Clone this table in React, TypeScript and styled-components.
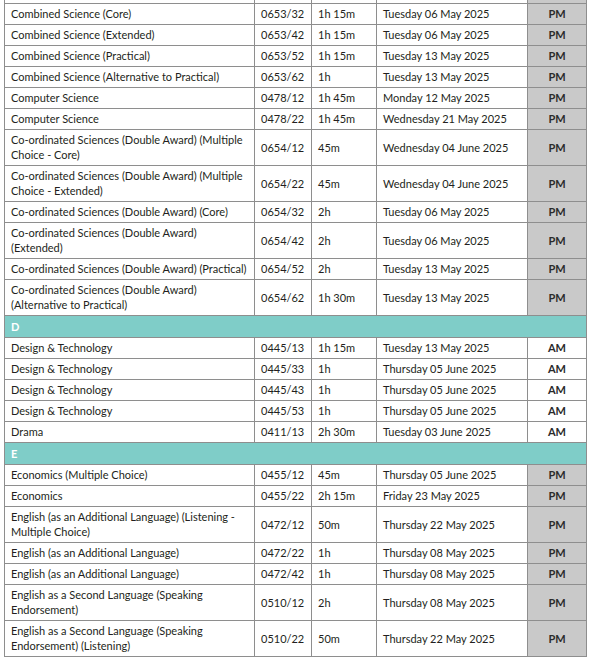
import styled, { createGlobalStyle } from "styled-components";

const GlobalStyle = createGlobalStyle`
	html, body {
		margin: 0;
		padding: 0;
		background: #ffffff;
	}
	body {
		font-family: Lato, "Open Sans", "Liberation Sans", sans-serif;
		color: #231f20;
	}
`;

type Session = "AM" | "PM";

type Exam = {
	title: string;
	code: string;
	duration: string;
	date: string;
	session: Session;
};

type Section = {
	letter?: string;
	exams: Exam[];
};

const sections: Section[] = [
	{
		exams: [
			{ title: "Combined Science (Core)", code: "0653/32", duration: "1h 15m", date: "Tuesday 06 May 2025", session: "PM" },
			{ title: "Combined Science (Extended)", code: "0653/42", duration: "1h 15m", date: "Tuesday 06 May 2025", session: "PM" },
			{ title: "Combined Science (Practical)", code: "0653/52", duration: "1h 15m", date: "Tuesday 13 May 2025", session: "PM" },
			{ title: "Combined Science (Alternative to Practical)", code: "0653/62", duration: "1h", date: "Tuesday 13 May 2025", session: "PM" },
			{ title: "Computer Science", code: "0478/12", duration: "1h 45m", date: "Monday 12 May 2025", session: "PM" },
			{ title: "Computer Science", code: "0478/22", duration: "1h 45m", date: "Wednesday 21 May 2025", session: "PM" },
			{ title: "Co-ordinated Sciences (Double Award) (Multiple\nChoice - Core)", code: "0654/12", duration: "45m", date: "Wednesday 04 June 2025", session: "PM" },
			{ title: "Co-ordinated Sciences (Double Award) (Multiple\nChoice - Extended)", code: "0654/22", duration: "45m", date: "Wednesday 04 June 2025", session: "PM" },
			{ title: "Co-ordinated Sciences (Double Award) (Core)", code: "0654/32", duration: "2h", date: "Tuesday 06 May 2025", session: "PM" },
			{ title: "Co-ordinated Sciences (Double Award)\n(Extended)", code: "0654/42", duration: "2h", date: "Tuesday 06 May 2025", session: "PM" },
			{ title: "Co-ordinated Sciences (Double Award) (Practical)", code: "0654/52", duration: "2h", date: "Tuesday 13 May 2025", session: "PM" },
			{ title: "Co-ordinated Sciences (Double Award)\n(Alternative to Practical)", code: "0654/62", duration: "1h 30m", date: "Tuesday 13 May 2025", session: "PM" },
		],
	},
	{
		letter: "D",
		exams: [
			{ title: "Design & Technology", code: "0445/13", duration: "1h 15m", date: "Tuesday 13 May 2025", session: "AM" },
			{ title: "Design & Technology", code: "0445/33", duration: "1h", date: "Thursday 05 June 2025", session: "AM" },
			{ title: "Design & Technology", code: "0445/43", duration: "1h", date: "Thursday 05 June 2025", session: "AM" },
			{ title: "Design & Technology", code: "0445/53", duration: "1h", date: "Thursday 05 June 2025", session: "AM" },
			{ title: "Drama", code: "0411/13", duration: "2h 30m", date: "Tuesday 03 June 2025", session: "AM" },
		],
	},
	{
		letter: "E",
		exams: [
			{ title: "Economics (Multiple Choice)", code: "0455/12", duration: "45m", date: "Thursday 05 June 2025", session: "PM" },
			{ title: "Economics", code: "0455/22", duration: "2h 15m", date: "Friday 23 May 2025", session: "PM" },
			{ title: "English (as an Additional Language) (Listening -\nMultiple Choice)", code: "0472/12", duration: "50m", date: "Thursday 22 May 2025", session: "PM" },
			{ title: "English (as an Additional Language)", code: "0472/22", duration: "1h", date: "Thursday 08 May 2025", session: "PM" },
			{ title: "English (as an Additional Language)", code: "0472/42", duration: "1h", date: "Thursday 08 May 2025", session: "PM" },
			{ title: "English as a Second Language (Speaking\nEndorsement)", code: "0510/12", duration: "2h", date: "Thursday 08 May 2025", session: "PM" },
			{ title: "English as a Second Language (Speaking\nEndorsement) (Listening)", code: "0510/22", duration: "50m", date: "Thursday 22 May 2025", session: "PM" },
		],
	},
];

const Page = styled.div`
	width: 589px;
	height: 660px;
	overflow: hidden;
	padding-left: 4px;
	box-sizing: border-box;
`;

const Table = styled.table`
	width: 582px;
	margin-top: -18px;
	border-collapse: collapse;
	table-layout: fixed;
	font-size: 11px;
`;

const Cell = styled.td`
	border: 1px solid #8e8e8e;
	padding: 2px 6px 3px;
	line-height: 15px;
	vertical-align: middle;
	white-space: pre-line;
	color: #231f20;
`;

const SessionCell = styled(Cell)<{ $session: Session }>`
	text-align: center;
	font-weight: 700;
	color: #2b2b2b;
	background: ${(p) => (p.$session === "PM" ? "#c9c9c9" : "#ffffff")};
`;

const SectionCell = styled.td`
	border: 1px solid #8e8e8e;
	background: #7fcdc8;
	color: #ffffff;
	font-weight: 700;
	padding: 3px 6px 3px;
	line-height: 15px;
`;

export default function App() {
	return (
		<Page>
			<GlobalStyle />
			<Table>
				<colgroup>
					<col style={{ width: 250 }} />
					<col style={{ width: 57 }} />
					<col style={{ width: 65 }} />
					<col style={{ width: 151 }} />
					<col style={{ width: 59 }} />
				</colgroup>
				<tbody>
					<tr>
						<Cell>&nbsp;</Cell>
						<Cell />
						<Cell />
						<Cell />
						<SessionCell $session="PM" />
					</tr>
					{sections.map((section, i) => (
						<>
							{section.letter && (
								<tr key={`h${i}`}>
									<SectionCell colSpan={5}>{section.letter}</SectionCell>
								</tr>
							)}
							{section.exams.map((exam) => (
								<tr key={exam.code}>
									<Cell>{exam.title}</Cell>
									<Cell>{exam.code}</Cell>
									<Cell>{exam.duration}</Cell>
									<Cell>{exam.date}</Cell>
									<SessionCell $session={exam.session}>{exam.session}</SessionCell>
								</tr>
							))}
						</>
					))}
				</tbody>
			</Table>
		</Page>
	);
}
